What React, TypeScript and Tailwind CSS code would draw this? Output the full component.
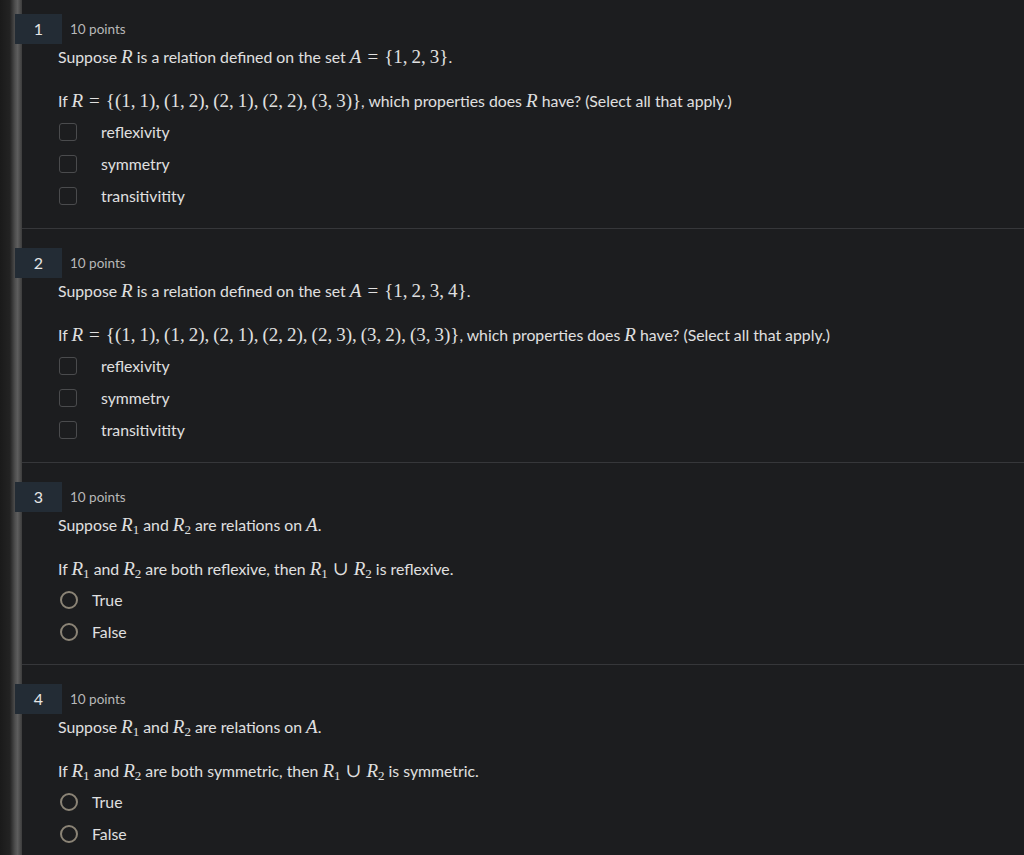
import React from "react";

const mathFont = { fontFamily: '"Liberation Serif", "DejaVu Serif", serif' };

function M({ children }: { children: React.ReactNode }) {
  return (
    <span className="text-[19px] leading-none" style={mathFont}>
      {children}
    </span>
  );
}

function V({ n, sub }: { n: string; sub?: string }) {
  return (
    <span className="text-[19px] leading-none" style={mathFont}>
      <i>{n}</i>
      {sub && <sub className="text-[13px] not-italic">{sub}</sub>}
    </span>
  );
}

function Eq() {
  return (
    <span className="mx-[6px] text-[19px] leading-none" style={mathFont}>
      =
    </span>
  );
}

function Set({ items }: { items: string[] }) {
  return (
    <M>
      {"{"}
      {items.map((it, i) => (
        <span key={i}>
          {it}
          {i < items.length - 1 && <span className="mr-[4px]">,</span>}
        </span>
      ))}
      {"}"}
    </M>
  );
}

function Pairs({ pairs }: { pairs: [number, number][] }) {
  return (
    <M>
      {"{"}
      {pairs.map(([a, b], i) => (
        <span key={i}>
          ({a},<span className="ml-[4px]">{b}</span>)
          {i < pairs.length - 1 && <span className="mr-[4px]">,</span>}
        </span>
      ))}
      {"}"}
    </M>
  );
}

function Checkbox({ label }: { label: string }) {
  return (
    <div className="flex h-[32px] items-center">
      <div className="ml-[1px] h-[18px] w-[18px] rounded-[3px] border border-[#4a4b4d]" />
      <span className="ml-[24px]">{label}</span>
    </div>
  );
}

function Radio({ label }: { label: string }) {
  return (
    <div className="flex h-[32px] items-center">
      <div className="ml-[2px] h-[18px] w-[18px] rounded-full border-2 border-[#8b8476]" />
      <span className="ml-[14px]">{label}</span>
    </div>
  );
}

function Question({
  num,
  first,
  intro,
  prompt,
  children,
}: {
  num: number;
  first?: boolean;
  intro: React.ReactNode;
  prompt: React.ReactNode;
  children: React.ReactNode;
}) {
  return (
    <div
      className={`border-b border-[#36373a] pl-[36px] pb-[16px] ${
        first ? "pt-[14px]" : "pt-[19px]"
      }`}
    >
      <div className="-ml-[43px] flex h-[30px] items-center">
        <div className="flex h-[30px] w-[47px] items-center justify-center bg-[#232c35] text-[16px] text-[#e6e6e6]">
          {num}
        </div>
        <span className="ml-[8px] text-[13.5px] text-[#b8b8b8]">10 points</span>
      </div>
      <div className="mt-[1px] h-[24px] leading-[24px] whitespace-nowrap">{intro}</div>
      <div className="mt-[20px] h-[24px] leading-[24px] whitespace-nowrap">{prompt}</div>
      <div className="mt-[3px]">{children}</div>
    </div>
  );
}

export default function App() {
  return (
    <div
      className="flex min-h-[855px] w-full bg-[#1c1d1f] text-[15.8px] text-[#e0e0e0]"
      style={{ fontFamily: 'Lato, "Open Sans", sans-serif' }}
    >
      <div className="w-[22px] shrink-0 bg-[linear-gradient(to_right,#1a1a1a_0%,#232323_45%,#4e4e4e_68%,#5e5e5e_80%,#3c3c3c_100%)]" />
      <div className="flex-1">
        <Question
          num={1}
          first
          intro={
            <>
              Suppose <V n="R" /> is a relation defined on the set <V n="A" />
              <Eq />
              <Set items={["1", "2", "3"]} />.
            </>
          }
          prompt={
            <>
              If <V n="R" />
              <Eq />
              <Pairs pairs={[[1, 1], [1, 2], [2, 1], [2, 2], [3, 3]]} />, which properties does{" "}
              <V n="R" /> have? (Select all that apply.)
            </>
          }
        >
          <Checkbox label="reflexivity" />
          <Checkbox label="symmetry" />
          <Checkbox label="transitivitity" />
        </Question>

        <Question
          num={2}
          intro={
            <>
              Suppose <V n="R" /> is a relation defined on the set <V n="A" />
              <Eq />
              <Set items={["1", "2", "3", "4"]} />.
            </>
          }
          prompt={
            <>
              If <V n="R" />
              <Eq />
              <Pairs
                pairs={[[1, 1], [1, 2], [2, 1], [2, 2], [2, 3], [3, 2], [3, 3]]}
              />
              , which properties does <V n="R" /> have? (Select all that apply.)
            </>
          }
        >
          <Checkbox label="reflexivity" />
          <Checkbox label="symmetry" />
          <Checkbox label="transitivitity" />
        </Question>

        <Question
          num={3}
          intro={
            <>
              Suppose <V n="R" sub="1" /> and <V n="R" sub="2" /> are relations on <V n="A" />.
            </>
          }
          prompt={
            <>
              If <V n="R" sub="1" /> and <V n="R" sub="2" /> are both reflexive, then{" "}
              <V n="R" sub="1" />
              <M>
                <span className="mx-[5px]">∪</span>
              </M>
              <V n="R" sub="2" /> is reflexive.
            </>
          }
        >
          <Radio label="True" />
          <Radio label="False" />
        </Question>

        <Question
          num={4}
          intro={
            <>
              Suppose <V n="R" sub="1" /> and <V n="R" sub="2" /> are relations on <V n="A" />.
            </>
          }
          prompt={
            <>
              If <V n="R" sub="1" /> and <V n="R" sub="2" /> are both symmetric, then{" "}
              <V n="R" sub="1" />
              <M>
                <span className="mx-[5px]">∪</span>
              </M>
              <V n="R" sub="2" /> is symmetric.
            </>
          }
        >
          <Radio label="True" />
          <Radio label="False" />
        </Question>
      </div>
    </div>
  );
}
